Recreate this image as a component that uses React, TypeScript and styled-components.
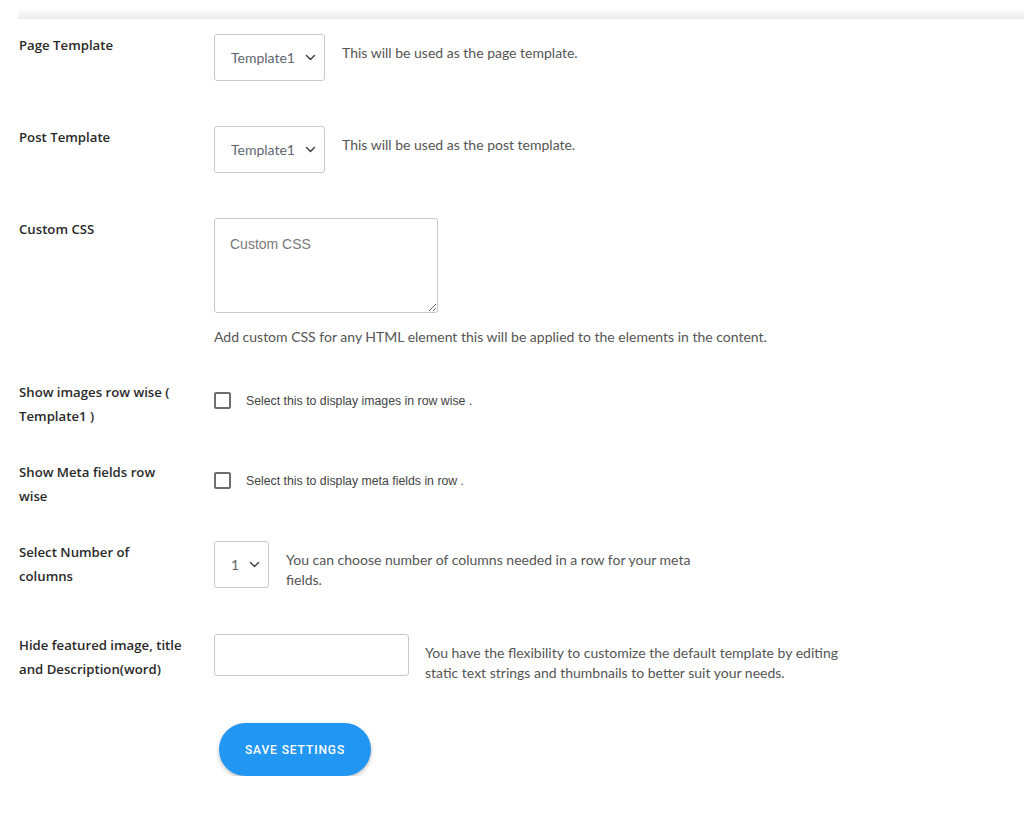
import React from "react";
import styled, { createGlobalStyle } from "styled-components";

const Global = createGlobalStyle`
  html, body { margin: 0; padding: 0; background: #fff; }
  body { font-family: "Lato", "Open Sans", sans-serif; }
  * { box-sizing: border-box; }
`;

const TopShade = styled.div`
  height: 19px;
  margin-left: 18px;
  background: linear-gradient(to bottom, #ffffff 0%, #ffffff 40%, #f4f4f4 75%, #ececec 100%);
`;

const Form = styled.div`
  padding: 14px 0 0 19px;
  display: flex;
  flex-direction: column;
`;

const Row = styled.div<{ $mb: number }>`
  display: flex;
  align-items: flex-start;
  margin-bottom: ${(p) => p.$mb}px;
`;

const Label = styled.div`
  width: 195px;
  flex: none;
  padding-right: 29px;
  font-family: "Open Sans", "Lato", sans-serif;
  font-size: 13.2px;
  font-weight: 600;
  line-height: 24px;
  color: #2a2a2a;
`;

const Control = styled.div`
  display: flex;
  align-items: flex-start;
  padding-top: 1px;
`;

const Column = styled.div`
  display: flex;
  flex-direction: column;
  padding-top: 1px;
`;

const SelectBox = styled.div<{ $w: number }>`
  width: ${(p) => p.$w}px;
  height: 47px;
  flex: none;
  border: 1px solid #c9c9c9;
  border-radius: 3px;
  display: flex;
  align-items: center;
  padding-left: 16px;
  gap: 10px;
  font-family: "Lato", sans-serif;
  font-size: 14px;
  color: #5f6670;
  background: #fff;
`;

const Chevron = () => (
  <svg width="11" height="7" viewBox="0 0 11 7" fill="none">
    <path d="M1.5 1.5 L5.5 5.5 L9.5 1.5" stroke="#444" strokeWidth="1.5" strokeLinecap="round" strokeLinejoin="round" />
  </svg>
);

const Desc = styled.div<{ $ml?: number; $mt?: number; $max?: number }>`
  margin-left: ${(p) => p.$ml ?? 17}px;
  margin-top: ${(p) => p.$mt ?? 9}px;
  max-width: ${(p) => (p.$max ? `${p.$max}px` : "none")};
  font-family: "Lato", sans-serif;
  font-size: 14px;
  line-height: 20px;
  color: #555;
`;

const TextArea = styled.textarea`
  width: 224px;
  height: 95px;
  border: 1px solid #c9c9c9;
  border-radius: 3px;
  padding: 17px 15px;
  font-family: "Liberation Sans", Arial, sans-serif;
  font-size: 14px;
  color: #333;
  resize: vertical;
  &::placeholder { color: #7a7a7a; }
`;

const TextInput = styled.input`
  width: 195px;
  height: 42px;
  flex: none;
  border: 1px solid #c9c9c9;
  border-radius: 3px;
  padding: 0 12px;
  font-size: 13px;
`;

const CheckWrap = styled.label`
  display: flex;
  align-items: center;
  gap: 15px;
  margin-top: 12px;
  font-family: "Liberation Sans", Arial, sans-serif;
  font-size: 12.3px;
  color: #444;
`;

const Box = styled.span`
  width: 17px;
  height: 17px;
  border: 2px solid #6e6e6e;
  border-radius: 2px;
  display: inline-block;
`;

const Button = styled.button`
  margin-left: 200px;
  width: 152px;
  height: 53px;
  border: none;
  border-radius: 27px;
  background: #2196f3;
  color: #fff;
  font-family: "Roboto", sans-serif;
  font-size: 12px;
  font-weight: 500;
  letter-spacing: 0.9px;
  text-transform: uppercase;
  box-shadow: 0 2px 4px rgba(0, 0, 0, 0.25);
  cursor: pointer;
`;

export default function App() {
  return (
    <>
      <Global />
      <TopShade />
      <Form>
        <Row $mb={44}>
          <Label>Page Template</Label>
          <Control>
            <SelectBox $w={111}>Template1 <Chevron /></SelectBox>
            <Desc>This will be used as the page template.</Desc>
          </Control>
        </Row>
        <Row $mb={44}>
          <Label>Post Template</Label>
          <Control>
            <SelectBox $w={111}>Template1 <Chevron /></SelectBox>
            <Desc>This will be used as the post template.</Desc>
          </Control>
        </Row>
        <Row $mb={33}>
          <Label>Custom CSS</Label>
          <Column>
            <TextArea placeholder="Custom CSS" />
            <Desc $ml={0} $mt={14}>
              Add custom CSS for any HTML element this will be applied to the elements in the content.
            </Desc>
          </Column>
        </Row>
        <Row $mb={32}>
          <Label>Show images row wise ( Template1 )</Label>
          <CheckWrap>
            <Box />
            Select this to display images in row wise .
          </CheckWrap>
        </Row>
        <Row $mb={32}>
          <Label>Show Meta fields row wise</Label>
          <CheckWrap>
            <Box />
            Select this to display meta fields in row .
          </CheckWrap>
        </Row>
        <Row $mb={43}>
          <Label>Select Number of columns</Label>
          <Control>
            <SelectBox $w={55}>1 <Chevron /></SelectBox>
            <Desc $max={412}>
              You can choose number of columns needed in a row for your meta fields.
            </Desc>
          </Control>
        </Row>
        <Row $mb={40}>
          <Label>Hide featured image, title and Description(word)</Label>
          <Control>
            <TextInput />
            <Desc $ml={16} $max={420}>
              You have the flexibility to customize the default template by editing static text strings and
              thumbnails to better suit your needs.
            </Desc>
          </Control>
        </Row>
        <div>
          <Button>Save Settings</Button>
        </div>
      </Form>
    </>
  );
}
